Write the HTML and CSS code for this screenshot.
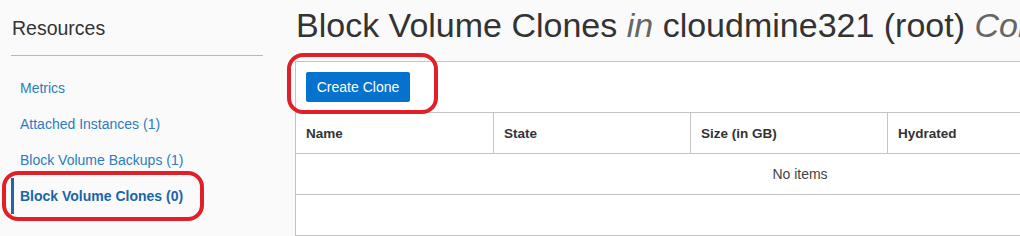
FILE: index.html
```html
<!DOCTYPE html>
<html lang="en">
<head>
<meta charset="utf-8">
<title>Block Volume Clones</title>
<link rel="stylesheet" href="styles.css">
</head>
<body>
<div class="page">
  <aside class="sidebar">
    <h2 class="sidebar-title">Resources</h2>
    <nav class="sidebar-nav">
      <a class="nav-item" href="#">Metrics</a>
      <a class="nav-item" href="#">Attached Instances (1)</a>
      <a class="nav-item" href="#">Block Volume Backups (1)</a>
      <a class="nav-item active" href="#">Block Volume Clones (0)</a>
    </nav>
  </aside>
  <main class="main">
    <h1 class="title">Block Volume Clones <em>in</em> cloudmine321 (root) <em>Compartment</em></h1>
    <section class="panel">
      <div class="toolbar">
        <button class="btn-primary" type="button">Create Clone</button>
      </div>
      <div class="table">
        <div class="row head">
          <div class="cell">Name</div>
          <div class="cell">State</div>
          <div class="cell">Size (in GB)</div>
          <div class="cell">Hydrated</div>
          <div class="cell">Created</div>
        </div>
        <div class="row empty">
          <div class="cell-full">No items</div>
        </div>
        <div class="row empty">
          <div class="cell-full"></div>
        </div>
      </div>
    </section>
  </main>
</div>
<div class="mark mark-button"></div>
<div class="mark mark-nav"></div>
</body>
</html>
```
FILE: styles.css
```css
html, body {
  margin: 0;
  padding: 0;
  background: #fafafa;
  font-family: "Liberation Sans", Arial, sans-serif;
  color: #333;
  overflow: hidden;
  height: 236px;
}

.page {
  display: flex;
  align-items: flex-start;
  width: 1400px;
}

.sidebar {
  width: 252px;
  margin-left: 11px;
  flex: none;
}

.sidebar-title {
  margin: 0;
  padding: 17px 0 16px 1px;
  font-size: 19.5px;
  line-height: 22px;
  font-weight: normal;
  color: #333;
  border-bottom: 1px solid #b8b8b8;
}

.sidebar-nav {
  display: flex;
  flex-direction: column;
  margin-top: 14px;
}

.nav-item {
  display: flex;
  align-items: center;
  height: 36px;
  padding-left: 9px;
  font-size: 14px;
  color: #2c7cc0;
  text-decoration: none;
}

.nav-item.active {
  padding-left: 6px;
  border-left: 3px solid #1f68a8;
  font-weight: bold;
  color: #1b65a8;
}

.main {
  margin-left: 32px;
  flex: 1;
}

.title {
  margin: 0;
  padding: 5px 0 0 1px;
  height: 40px;
  font-size: 34px;
  line-height: 40px;
  font-weight: normal;
  color: #333;
  white-space: nowrap;
}

.title em {
  color: #666;
}

.panel {
  margin-top: 16px;
  background: #fff;
  border-top: 1px solid #c4c4c4;
  border-left: 1px solid #c4c4c4;
  height: 200px;
}

.toolbar {
  padding: 10px;
}

.btn-primary {
  display: block;
  height: 30px;
  width: 104px;
  padding: 0;
  border: none;
  border-radius: 2px;
  background: #0572ce;
  color: #fff;
  font-family: "Liberation Sans", Arial, sans-serif;
  font-size: 14px;
}

.table {
  width: 1008px;
  border-top: 1px solid #c4c4c4;
}

.row {
  display: grid;
  grid-template-columns: 198px 197px 197px 197px 1fr;
  height: 40px;
  border-bottom: 1px solid #c4c4c4;
}

.row.empty {
  display: flex;
}

.cell {
  display: flex;
  align-items: center;
  padding-left: 10px;
  border-right: 1px solid #c4c4c4;
  font-size: 13.5px;
  font-weight: bold;
  color: #333;
}

.cell-full {
  flex: 1;
  display: flex;
  align-items: center;
  justify-content: center;
  font-size: 14px;
  color: #444;
}

.mark {
  position: absolute;
  box-sizing: border-box;
  border: 4px solid #e01f26;
  border-radius: 16px;
}

.mark-button {
  left: 287px;
  top: 53px;
  width: 151px;
  height: 61px;
}

.mark-nav {
  left: 2px;
  top: 171px;
  width: 202px;
  height: 50px;
}
```
